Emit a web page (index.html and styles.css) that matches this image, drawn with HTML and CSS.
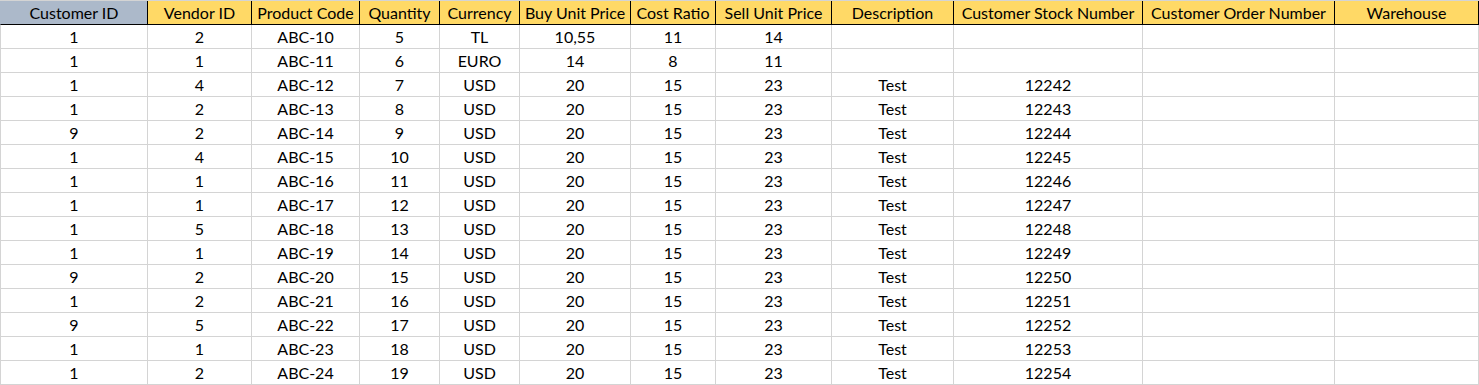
FILE: index.html
```html
<!DOCTYPE html>
<html>
<head>
<meta charset="utf-8">
<link rel="stylesheet" href="styles.css">
</head>
<body>
<div class="sheet">
  <div class="hd hd-id">Customer ID</div>
  <div class="hd">Vendor ID</div>
  <div class="hd">Product Code</div>
  <div class="hd">Quantity</div>
  <div class="hd">Currency</div>
  <div class="hd">Buy Unit Price</div>
  <div class="hd">Cost Ratio</div>
  <div class="hd">Sell Unit Price</div>
  <div class="hd">Description</div>
  <div class="hd">Customer Stock Number</div>
  <div class="hd">Customer Order Number</div>
  <div class="hd">Warehouse</div>

  <div class="c first">1</div><div class="c">2</div><div class="c">ABC-10</div><div class="c">5</div><div class="c">TL</div><div class="c">10,55</div><div class="c">11</div><div class="c">14</div><div class="c"></div><div class="c"></div><div class="c"></div><div class="c"></div>
  <div class="c first">1</div><div class="c">1</div><div class="c">ABC-11</div><div class="c">6</div><div class="c">EURO</div><div class="c">14</div><div class="c">8</div><div class="c">11</div><div class="c"></div><div class="c"></div><div class="c"></div><div class="c"></div>
  <div class="c first">1</div><div class="c">4</div><div class="c">ABC-12</div><div class="c">7</div><div class="c">USD</div><div class="c">20</div><div class="c">15</div><div class="c">23</div><div class="c">Test</div><div class="c">12242</div><div class="c"></div><div class="c"></div>
  <div class="c first">1</div><div class="c">2</div><div class="c">ABC-13</div><div class="c">8</div><div class="c">USD</div><div class="c">20</div><div class="c">15</div><div class="c">23</div><div class="c">Test</div><div class="c">12243</div><div class="c"></div><div class="c"></div>
  <div class="c first">9</div><div class="c">2</div><div class="c">ABC-14</div><div class="c">9</div><div class="c">USD</div><div class="c">20</div><div class="c">15</div><div class="c">23</div><div class="c">Test</div><div class="c">12244</div><div class="c"></div><div class="c"></div>
  <div class="c first">1</div><div class="c">4</div><div class="c">ABC-15</div><div class="c">10</div><div class="c">USD</div><div class="c">20</div><div class="c">15</div><div class="c">23</div><div class="c">Test</div><div class="c">12245</div><div class="c"></div><div class="c"></div>
  <div class="c first">1</div><div class="c">1</div><div class="c">ABC-16</div><div class="c">11</div><div class="c">USD</div><div class="c">20</div><div class="c">15</div><div class="c">23</div><div class="c">Test</div><div class="c">12246</div><div class="c"></div><div class="c"></div>
  <div class="c first">1</div><div class="c">1</div><div class="c">ABC-17</div><div class="c">12</div><div class="c">USD</div><div class="c">20</div><div class="c">15</div><div class="c">23</div><div class="c">Test</div><div class="c">12247</div><div class="c"></div><div class="c"></div>
  <div class="c first">1</div><div class="c">5</div><div class="c">ABC-18</div><div class="c">13</div><div class="c">USD</div><div class="c">20</div><div class="c">15</div><div class="c">23</div><div class="c">Test</div><div class="c">12248</div><div class="c"></div><div class="c"></div>
  <div class="c first">1</div><div class="c">1</div><div class="c">ABC-19</div><div class="c">14</div><div class="c">USD</div><div class="c">20</div><div class="c">15</div><div class="c">23</div><div class="c">Test</div><div class="c">12249</div><div class="c"></div><div class="c"></div>
  <div class="c first">9</div><div class="c">2</div><div class="c">ABC-20</div><div class="c">15</div><div class="c">USD</div><div class="c">20</div><div class="c">15</div><div class="c">23</div><div class="c">Test</div><div class="c">12250</div><div class="c"></div><div class="c"></div>
  <div class="c first">1</div><div class="c">2</div><div class="c">ABC-21</div><div class="c">16</div><div class="c">USD</div><div class="c">20</div><div class="c">15</div><div class="c">23</div><div class="c">Test</div><div class="c">12251</div><div class="c"></div><div class="c"></div>
  <div class="c first">9</div><div class="c">5</div><div class="c">ABC-22</div><div class="c">17</div><div class="c">USD</div><div class="c">20</div><div class="c">15</div><div class="c">23</div><div class="c">Test</div><div class="c">12252</div><div class="c"></div><div class="c"></div>
  <div class="c first">1</div><div class="c">1</div><div class="c">ABC-23</div><div class="c">18</div><div class="c">USD</div><div class="c">20</div><div class="c">15</div><div class="c">23</div><div class="c">Test</div><div class="c">12253</div><div class="c"></div><div class="c"></div>
  <div class="c first">1</div><div class="c">2</div><div class="c">ABC-24</div><div class="c">19</div><div class="c">USD</div><div class="c">20</div><div class="c">15</div><div class="c">23</div><div class="c">Test</div><div class="c">12254</div><div class="c"></div><div class="c"></div>
</div>
</body>
</html>
```

FILE: styles.css
```css
html, body {
  margin: 0;
  padding: 0;
  background: #ffffff;
}

.sheet {
  display: grid;
  grid-template-columns: 148px 104px 108px 80px 80px 111px 85px 116px 122px 189px 192px 144px;
  grid-auto-rows: 24px;
  border-top: 1px solid #d4d4d4;
  font-family: Lato, "Liberation Sans", sans-serif;
  font-size: 16px;
  color: #000000;
  width: 1479px;
}

.hd, .c {
  box-sizing: border-box;
  display: flex;
  align-items: center;
  justify-content: center;
  white-space: nowrap;
  overflow: hidden;
}

.hd {
  background: #ffd966;
  border-right: 1px solid #000000;
  border-bottom: 1px solid #000000;
}

.hd-id {
  background: #acb9ca;
  border-left: 1px solid #acb9ca;
}

.c {
  border-right: 1px solid #d4d4d4;
  border-bottom: 1px solid #d4d4d4;
}

.c.first {
  border-left: 1px solid #d4d4d4;
}
```
